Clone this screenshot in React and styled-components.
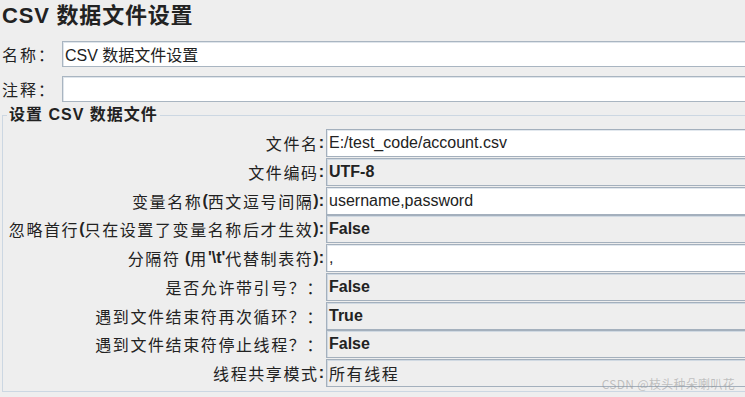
import React from "react";
import styled, { createGlobalStyle } from "styled-components";

const GlobalStyle = createGlobalStyle`
  html, body {
    margin: 0;
    padding: 0;
    background: #eeeeee;
    overflow: hidden;
  }
  body {
    font-family: "Liberation Sans", Arial, "Noto Sans CJK SC", sans-serif;
    color: #222;
  }
`;

const Page = styled.div`
  position: relative;
  width: 745px;
  height: 397px;
  overflow: hidden;
`;

const Title = styled.h1`
  margin: 0;
  padding: 2px 0 0 2px;
  height: 35px;
  font-size: 22px;
  font-weight: bold;
  line-height: 28px;
  color: #222;
  letter-spacing: 0.8px;
`;

const TopRow = styled.div`
  display: flex;
  align-items: center;
  width: 900px;
  margin-top: ${(p) => p.$top || 0}px;
`;

const TopLabel = styled.span`
  width: 60px;
  padding-left: 2px;
  font-size: 16px;
  font-family: "Noto Sans CJK SC", sans-serif;
  letter-spacing: 2px;
  color: #222;
`;

const TextBox = styled.div`
  flex: 1;
  height: 26px;
  box-sizing: border-box;
  display: flex;
  align-items: center;
  padding-left: 2px;
  background: #fff;
  border: 1px solid #a9b5c1;
  box-shadow: inset 1px 1px 0 #dfe5eb;
  font-size: 16px;
  color: #222;
  white-space: nowrap;
`;

const Group = styled.fieldset`
  margin: 4px 0 0 2px;
  padding: 2px 0 0 3px;
  width: 900px;
  height: 286px;
  box-sizing: border-box;
  border: 1px solid #ccd7e2;
  border-right: none;
`;

const Legend = styled.legend`
  padding: 0 2px;
  margin-left: 1px;
  font-size: 16px;
  font-weight: bold;
  color: #222;
  letter-spacing: 1px;
  line-height: 18px;
`;

const Grid = styled.div`
  display: grid;
  grid-template-columns: 318px 1fr;
  grid-auto-rows: 28px;
  row-gap: 0.75px;
  column-gap: 2px;
  margin-top: 3px;
`;

const Label = styled.div`
  display: flex;
  align-items: center;
  justify-content: flex-end;
  font-size: 16px;
  color: #222;
  white-space: pre;
`;

const Cjk = styled.span`
  font-family: "Noto Sans CJK SC", sans-serif;
  font-weight: normal;
  letter-spacing: 1.6px;
`;

const Latin = styled.span`
  font-family: "Liberation Sans", Arial, sans-serif;
  font-weight: bold;
`;

const Field = styled.div`
  display: flex;
  align-items: center;
  box-sizing: border-box;
  padding-left: 2px;
  background: ${(p) => (p.$readonly ? "#eeeeee" : "#ffffff")};
  border: 1px solid #a4b0bd;
  box-shadow: inset 1px 1px 0 ${(p) => (p.$readonly ? "#d0d9e2" : "#e2e8ee")};
  font-size: 16px;
  font-weight: ${(p) => (p.$bold ? "bold" : "normal")};
  font-family: ${(p) =>
    p.$cjk ? '"Noto Sans CJK SC", sans-serif' : '"Liberation Sans", Arial, sans-serif'};
  letter-spacing: ${(p) => (p.$cjk ? "1.6px" : "0")};
  color: #222;
  white-space: nowrap;
`;

const Watermark = styled.div`
  position: absolute;
  right: 10px;
  bottom: 5px;
  font-size: 12px;
  font-family: "Noto Sans CJK SC", sans-serif;
  color: rgba(150, 150, 150, 0.55);
  letter-spacing: 0.3px;
`;

const CJK_RE = /[\u3000-\u9fff\uff00-\uffef]/;

const splitRuns = (text) =>
  text.match(/[\u3000-\u9fff\uff00-\uffef]+|[^\u3000-\u9fff\uff00-\uffef]+/g) || [];

const MixedLabel = ({ text }) => (
  <Label>
    {splitRuns(text).map((run, i) =>
      CJK_RE.test(run) ? <Cjk key={i}>{run}</Cjk> : <Latin key={i}>{run}</Latin>
    )}
  </Label>
);

const rows = [
  { label: "文件名:", value: "E:/test_code/account.csv" },
  { label: "文件编码:", value: "UTF-8", readonly: true, bold: true },
  { label: "变量名称(西文逗号间隔):", value: "username,password" },
  { label: "忽略首行(只在设置了变量名称后才生效):", value: "False", readonly: true, bold: true },
  { label: "分隔符 (用'\\t'代替制表符):", value: "," },
  { label: "是否允许带引号？：", value: "False", readonly: true, bold: true },
  { label: "遇到文件结束符再次循环？：", value: "True", readonly: true, bold: true },
  { label: "遇到文件结束符停止线程？：", value: "False", readonly: true, bold: true },
  { label: "线程共享模式:", value: "所有线程", readonly: true, cjk: true },
];

export default function App() {
  return (
    <Page>
      <GlobalStyle />
      <Title>CSV 数据文件设置</Title>
      <TopRow $top={4}>
        <TopLabel>名称：</TopLabel>
        <TextBox>CSV 数据文件设置</TextBox>
      </TopRow>
      <TopRow $top={9}>
        <TopLabel>注释：</TopLabel>
        <TextBox />
      </TopRow>
      <Group>
        <Legend>设置 CSV 数据文件</Legend>
        <Grid>
          {rows.map((r) => (
            <React.Fragment key={r.label}>
              <MixedLabel text={r.label} />
              <Field $readonly={r.readonly} $bold={r.bold} $cjk={r.cjk}>
                {r.value}
              </Field>
            </React.Fragment>
          ))}
        </Grid>
      </Group>
      <Watermark>CSDN @枝头种朵喇叭花</Watermark>
    </Page>
  );
}
